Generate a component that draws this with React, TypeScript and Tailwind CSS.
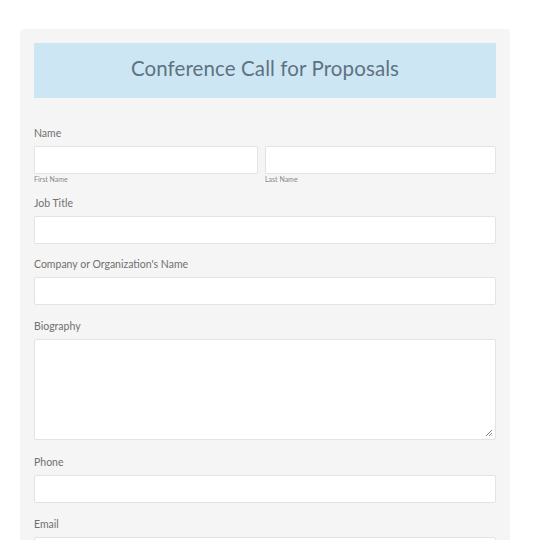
import React from 'react';

const Label: React.FC<{ children: React.ReactNode }> = ({ children }) => (
  <div className="text-[10.5px] leading-[14px] text-[#707070] mb-[6px]">{children}</div>
);

const Input: React.FC = () => (
  <div className="h-[28px] bg-white border border-[#e3e3e3] rounded-[2px]" />
);

const App: React.FC = () => {
  return (
    <div className="min-h-[540px] bg-white pt-[29px] pl-[20px] overflow-hidden" style={{ fontFamily: 'Lato, "Open Sans", sans-serif' }}>
      <div className="w-[490px] bg-[#f5f5f5] rounded-t-[4px] px-[14px] pt-[14px] pb-[40px]">
        {/* header banner */}
        <div className="h-[55px] bg-[#cde6f3] flex items-center justify-center pb-[5px]">
          <h1 className="text-[20.5px] text-[#5f7282] tracking-[0.1px]">Conference Call for Proposals</h1>
        </div>

        <div className="mt-[28px]">
          <Label>Name</Label>
          <div className="flex">
            <div className="w-[224px]">
              <Input />
              <div className="text-[7px] leading-[8px] text-[#888] mt-[1px]">First Name</div>
            </div>
            <div className="flex-1 ml-[7px]">
              <Input />
              <div className="text-[7px] leading-[8px] text-[#888] mt-[1px]">Last Name</div>
            </div>
          </div>
        </div>

        <div className="mt-[13px]">
          <Label>Job Title</Label>
          <Input />
        </div>

        <div className="mt-[13px]">
          <Label>Company or Organization's Name</Label>
          <Input />
        </div>

        <div className="mt-[14px]">
          <Label>Biography</Label>
          <div className="relative h-[101px] bg-white border border-[#e3e3e3] rounded-[2px]">
            {/* resize grip */}
            <svg className="absolute right-[2px] bottom-[2px]" width="8" height="8" viewBox="0 0 8 8">
              <path d="M7 1 L1 7 M7 4 L4 7 M7 6.5 L6.5 7" stroke="#888" strokeWidth="1" />
            </svg>
          </div>
        </div>

        <div className="mt-[15px]">
          <Label>Phone</Label>
          <Input />
        </div>

        <div className="mt-[14px]">
          <Label>Email</Label>
          <Input />
        </div>
      </div>
    </div>
  );
};

export default App;
